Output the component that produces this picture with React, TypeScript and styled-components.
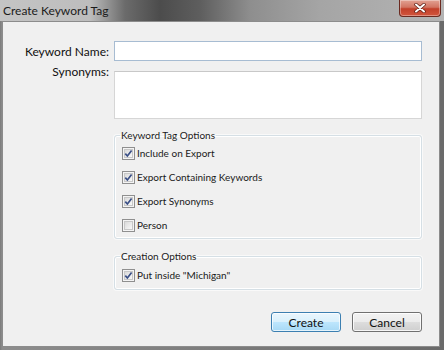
import React from 'react';
import styled, { createGlobalStyle } from 'styled-components';

const GlobalStyle = createGlobalStyle`
  html, body {
    margin: 0;
    padding: 0;
  }
  body {
    width: 444px;
    height: 350px;
    overflow: hidden;
    background: #6f6f6f;
    font-family: Lato, "Open Sans", "Liberation Sans", sans-serif;
    color: #111;
  }
`;

const Window = styled.div`
  width: 444px;
  height: 350px;
  box-sizing: border-box;
  display: flex;
  flex-direction: column;
  background: linear-gradient(90deg, #7b7b7b 0, #8d8d8d 2px, #6a6a6a 100%);
  padding: 0 4px 3px 2px;
`;

const TitleBar = styled.div`
  position: relative;
  height: 21px;
  margin: 0 -4px 0 -2px;
  display: flex;
  align-items: center;
  padding-left: 3px;
  background: linear-gradient(
    90deg,
    #c4c4c4 0,
    #bdbdbd 90px,
    #6b6b6b 125px,
    #4c4c4c 160px,
    #5e5e5e 200px,
    #8e8e8e 250px,
    #a5a5a5 320px,
    #b4b4b4 444px
  );
`;

const Title = styled.span`
  font-size: 12px;
  color: #1b1b1b;
`;

const CloseButton = styled.div`
  position: absolute;
  top: 0;
  right: 3px;
  width: 42px;
  height: 17px;
  box-sizing: border-box;
  border: 1px solid #6b2a20;
  border-top: none;
  border-radius: 0 0 4px 4px;
  background: linear-gradient(180deg, #e2a293 0, #d27563 45%, #c2402a 55%, #d2553c 100%);
  display: flex;
  align-items: center;
  justify-content: center;
  box-shadow: inset 0 0 0 1px rgba(255, 255, 255, 0.35);
`;

const Body = styled.div`
  flex: 1;
  background: #f0f0f0;
  border: 1px solid #8c8c8c;
`;

const Form = styled.div`
  display: grid;
  grid-template-columns: 106px 308px;
  column-gap: 5px;
  padding-top: 19px;
`;

const Label = styled.label<{ $top?: boolean }>`
  font-size: 12px;
  text-align: right;
  align-self: ${(p) => (p.$top ? 'start' : 'center')};
  padding-top: ${(p) => (p.$top ? '3px' : '0')};
`;

const TextInput = styled.input`
  box-sizing: border-box;
  height: 20px;
  margin: 0;
  border: 1px solid #a7bcd2;
  background: #fff;
  outline: none;
`;

const TextArea = styled.textarea`
  box-sizing: border-box;
  height: 48px;
  margin: 10px 0 0;
  border: 1px solid #d6d6d6;
  border-top-color: #c8c8c8;
  background: #fff;
  resize: none;
  outline: none;
`;

const Group = styled.fieldset<{ $gap: number; $pad: string }>`
  grid-column: 2;
  margin: ${(p) => p.$gap}px 0 0;
  padding: ${(p) => p.$pad};
  border: 1px solid #d5dfe5;
  border-radius: 3px;
  box-shadow: inset 0 0 0 1px #fff, 0 0 0 1px rgba(255, 255, 255, 0.6);
  display: flex;
  flex-direction: column;
  gap: 4px;
`;

const Legend = styled.legend`
  font-size: 10px;
  line-height: 16px;
  padding: 0 1px;
  margin-left: -2px;
  color: #1a1a1a;
`;

const CheckRow = styled.div`
  height: 20px;
  display: flex;
  align-items: center;
  gap: 2px;
  font-size: 10px;
  color: #1a1a1a;
`;

const Buttons = styled.div`
  grid-column: 2;
  display: flex;
  justify-content: flex-end;
  gap: 11px;
  margin-top: 22px;
`;

const Button = styled.button<{ $default?: boolean }>`
  width: 70px;
  height: 20px;
  box-sizing: border-box;
  margin: 0;
  padding: 0;
  font-family: inherit;
  font-size: 12px;
  color: #111;
  border-radius: 3px;
  border: 1px solid ${(p) => (p.$default ? '#3c7fb1' : '#707070')};
  background: ${(p) =>
    p.$default
      ? 'linear-gradient(180deg, #eaf6fd 0, #d9f0fc 50%, #bee6fd 50%, #a7d9f5 100%)'
      : 'linear-gradient(180deg, #f2f2f2 0, #ebebeb 50%, #dddddd 50%, #cfcfcf 100%)'};
  box-shadow: inset 0 0 0 1px ${(p) => (p.$default ? 'rgba(255,255,255,0.7)' : 'rgba(255,255,255,0.8)')};
`;

const CheckBox = ({ checked }: { checked: boolean }) => (
  <svg width="13" height="13" viewBox="0 0 13 13">
    <defs>
      <linearGradient id="cbfill" x1="0" y1="0" x2="1" y2="1">
        <stop offset="0" stopColor="#d8d8d8" />
        <stop offset="1" stopColor="#fbfbfb" />
      </linearGradient>
    </defs>
    <rect x="0.5" y="0.5" width="12" height="12" fill="#f4f4f4" stroke="#8f8f8f" />
    <rect x="2.5" y="2.5" width="8" height="8" fill="url(#cbfill)" stroke="#c8c8c8" />
    {checked && (
      <path d="M3.3 6.6 L5.4 9 L9.6 3.6" fill="none" stroke="#3a4f86" strokeWidth="1.7" />
    )}
  </svg>
);

const options = [
  { label: 'Include on Export', checked: true },
  { label: 'Export Containing Keywords', checked: true },
  { label: 'Export Synonyms', checked: true },
  { label: 'Person', checked: false },
];

export default function App() {
  return (
    <>
      <GlobalStyle />
      <Window>
        <TitleBar>
          <Title>Create Keyword Tag</Title>
          <CloseButton>
            <svg width="12" height="10" viewBox="0 0 12 10">
              <path d="M2 1.5 L10 8.5 M10 1.5 L2 8.5" stroke="#5a1a10" strokeWidth="3.4" strokeLinecap="round" />
              <path d="M2 1.5 L10 8.5 M10 1.5 L2 8.5" stroke="#fff" strokeWidth="2" strokeLinecap="round" />
            </svg>
          </CloseButton>
        </TitleBar>
        <Body>
          <Form>
            <Label>Keyword Name:</Label>
            <TextInput />
            <Label $top>Synonyms:</Label>
            <TextArea />
            <Group $gap={8} $pad="0 7px 3px">
              <Legend>Keyword Tag Options</Legend>
              {options.map((o) => (
                <CheckRow key={o.label}>
                  <CheckBox checked={o.checked} />
                  <span>{o.label}</span>
                </CheckRow>
              ))}
            </Group>
            <Group $gap={9} $pad="1px 7px 4px">
              <Legend>Creation Options</Legend>
              <CheckRow>
                <CheckBox checked />
                <span>Put inside "Michigan"</span>
              </CheckRow>
            </Group>
            <Buttons>
              <Button $default>Create</Button>
              <Button>Cancel</Button>
            </Buttons>
          </Form>
        </Body>
      </Window>
    </>
  );
}
